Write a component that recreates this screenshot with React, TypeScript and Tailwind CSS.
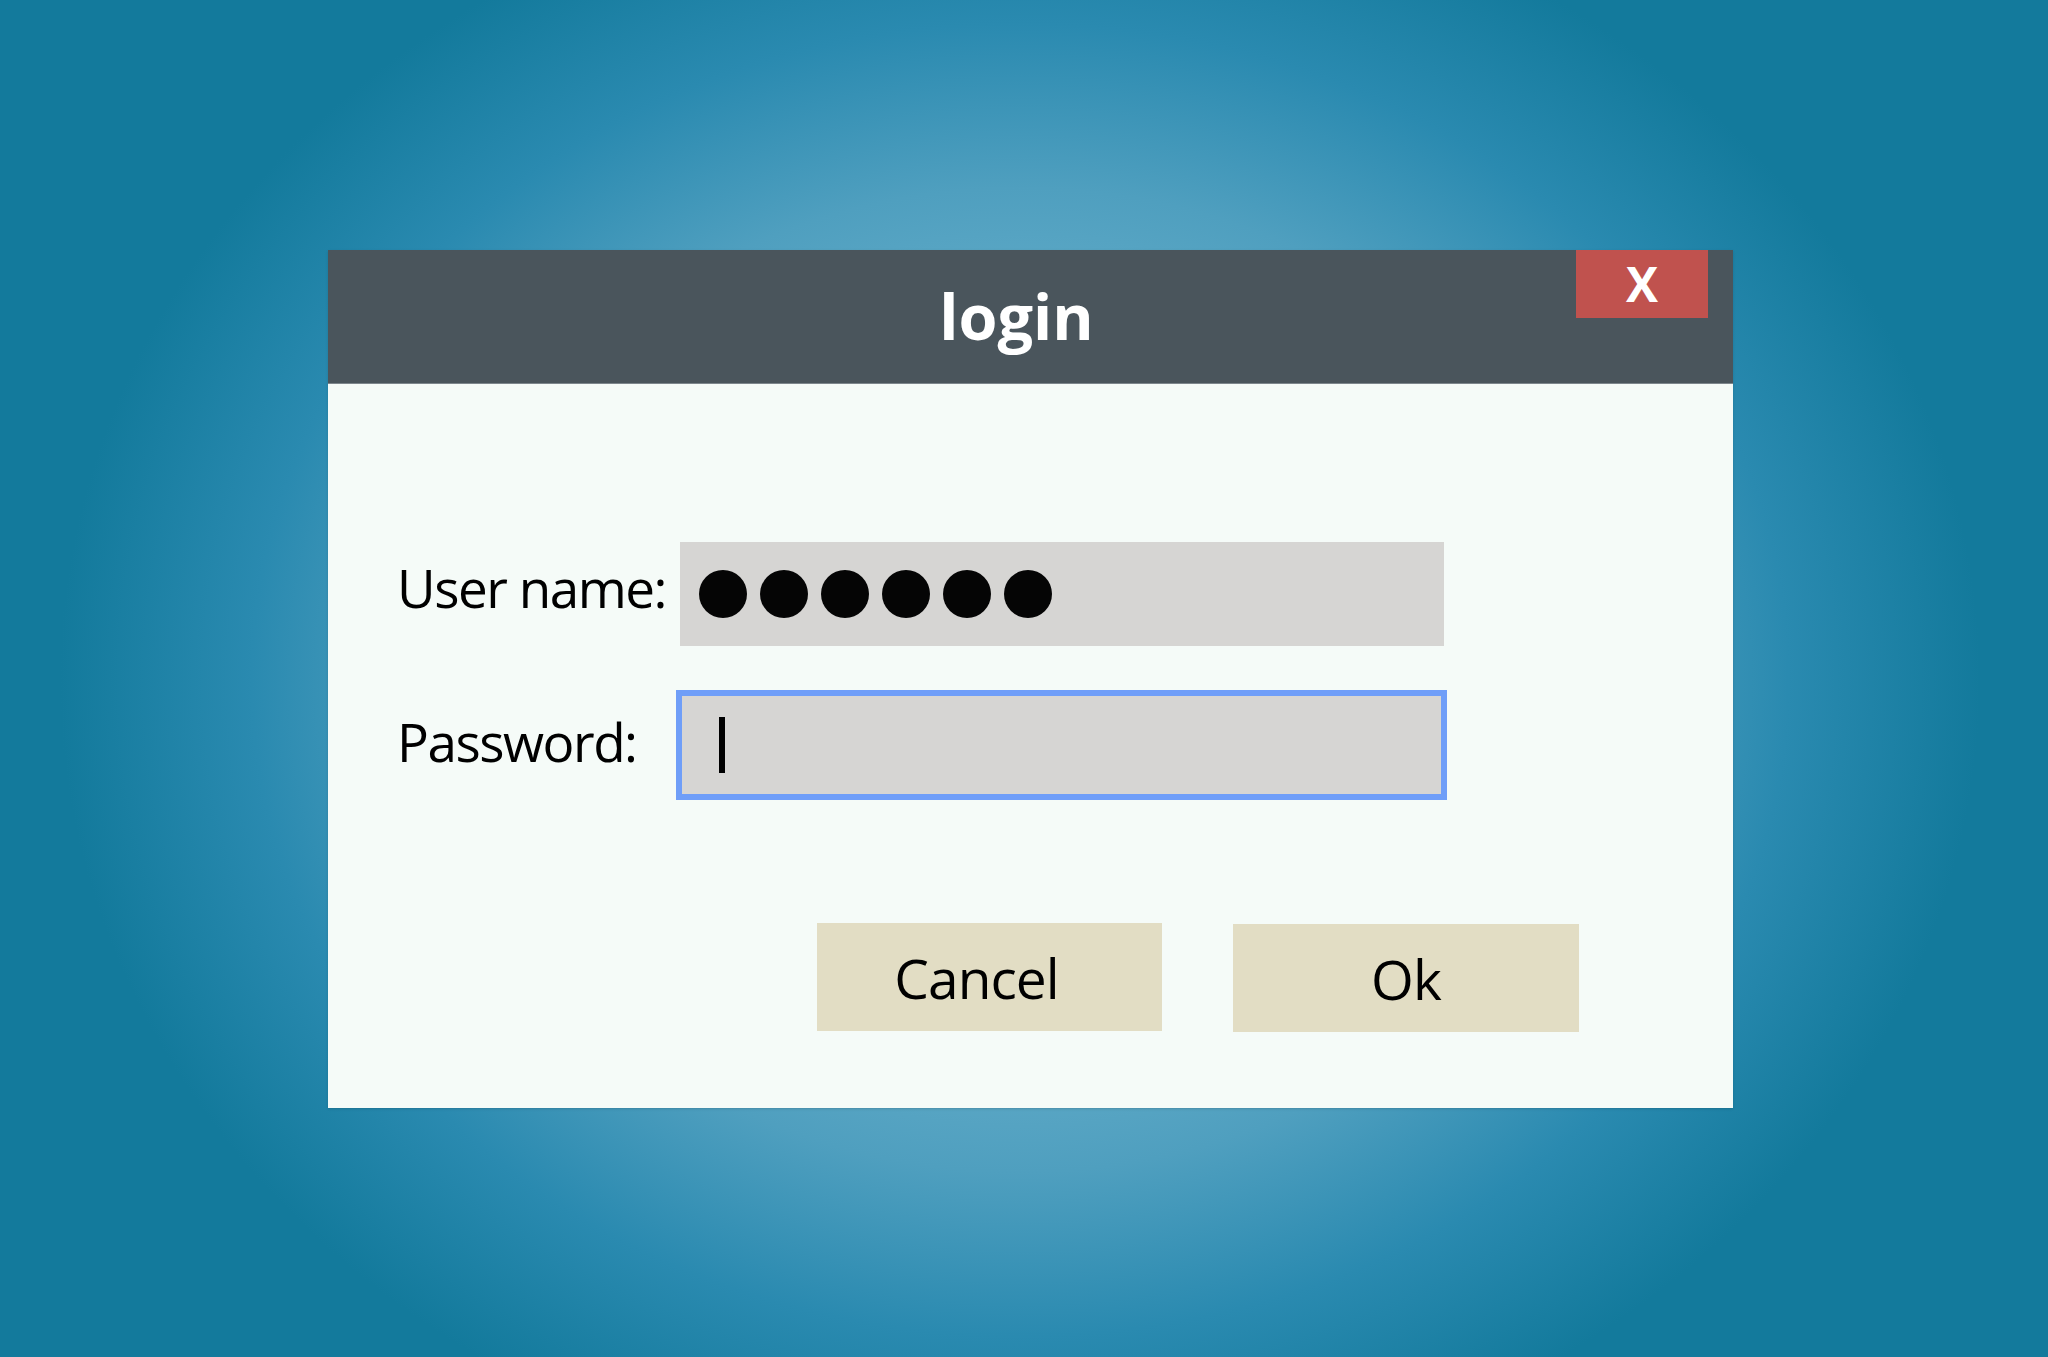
import React from "react";

const font = { fontFamily: '"Open Sans", "Noto Sans", sans-serif' };

const App: React.FC = () => {
  const dots = [0, 1, 2, 3, 4, 5];

  return (
    <div
      className="w-full h-[1357px] pt-[250px] pl-[328px] bg-[radial-gradient(ellipse_960px_820px_at_1020px_680px,#8fcbe0_0%,#4f9fbf_60%,#2a8ab0_80%,#137a9c_100%)]"
      style={font}
    >
      <div className="w-[1405px] shadow-sm">
        {/* title bar */}
        <div className="relative h-[134px] bg-[#4a555c] border-b border-[#7d868c] flex justify-center pr-[28px]">
          <h1 className="pt-[34px] text-[63px] leading-none font-bold text-white">
            login
          </h1>
          <button className="absolute top-0 right-[25px] w-[132px] h-[68px] bg-[#c0524e] flex items-center justify-center text-[48px] leading-none font-bold text-white">
            X
          </button>
        </div>

        {/* body */}
        <div className="h-[724px] bg-[#f5fbf8] pt-[158px] pl-[69px] tracking-[-0.092em]">
          <div className="flex items-center">
            <label className="w-[279px] mb-[14px] text-[53px] leading-none text-black">
              User name:
            </label>
            <div className="ml-[4px] w-[764px] h-[104px] bg-[#d6d5d3] flex items-center gap-[13px] pl-[19px]">
              {dots.map((d) => (
                <span key={d} className="w-[48px] h-[48px] rounded-full bg-[#050505]" />
              ))}
            </div>
          </div>

          <div className="flex items-center mt-[44px]">
            <label className="w-[279px] mb-[7px] text-[53px] leading-none text-black">
              Password:
            </label>
            <div className="w-[771px] h-[110px] border-[6px] border-[#6f9ef8] bg-[#d6d5d3] flex items-center pl-[37px]">
              <span className="w-[6px] h-[56px] bg-black" />
            </div>
          </div>

          <div className="flex justify-end gap-[71px] pr-[154px] mt-[123px] tracking-[-0.06em]">
            <button className="w-[345px] h-[108px] bg-[#e2ddc4] text-[55px] leading-none text-black pr-[26px]">
              Cancel
            </button>
            <button className="w-[346px] h-[108px] bg-[#e2ddc4] text-[55px] leading-none text-black mt-[1px]">
              Ok
            </button>
          </div>
        </div>
      </div>
    </div>
  );
};

export default App;
